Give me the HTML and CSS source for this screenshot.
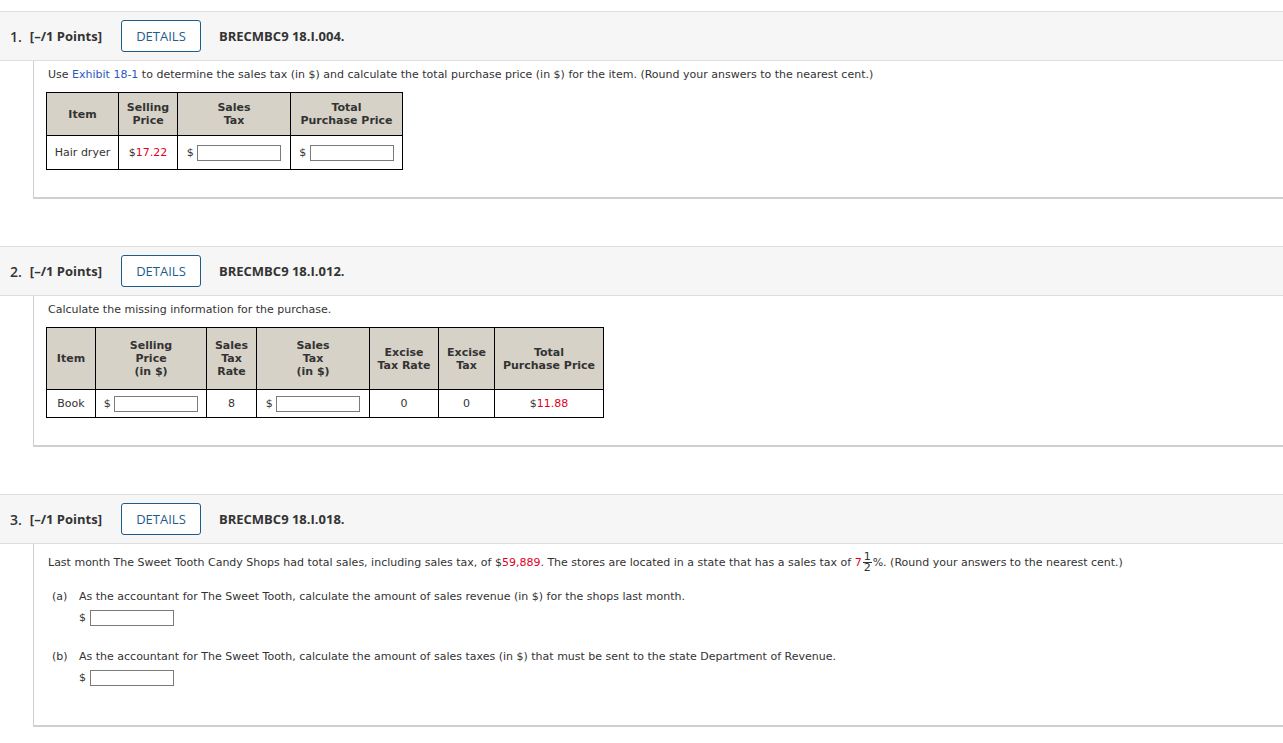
FILE: index.html
```html
<!DOCTYPE html>
<html lang="en">
<head>
    <meta charset="UTF-8">
    <title>Assignment</title>
    <link rel="stylesheet" href="styles.css">
</head>
<body>
    <div class="question">
        <div class="q-head">
            <span class="q-num">1.</span>
            <span class="q-points">[&ndash;/1 Points]</span>
            <button class="details">DETAILS</button>
            <span class="q-code">BRECMBC9 18.I.004.</span>
        </div>
        <div class="q-body">
            <p class="prompt">Use <a href="#" class="link">Exhibit 18-1</a> to determine the sales tax (in $) and calculate the total purchase price (in $) for the item. (Round your answers to the nearest cent.)</p>
            <table class="grid grid-one">
                <colgroup>
                    <col class="w72"><col class="w59"><col class="w113"><col class="w112">
                </colgroup>
                <tr class="head-row">
                    <th>Item</th>
                    <th>Selling<br>Price</th>
                    <th>Sales<br>Tax</th>
                    <th>Total<br>Purchase Price</th>
                </tr>
                <tr class="body-row tall">
                    <td>Hair dryer</td>
                    <td>$<span class="given">17.22</span></td>
                    <td>$ <input type="text" class="answer"></td>
                    <td>$ <input type="text" class="answer"></td>
                </tr>
            </table>
        </div>
    </div>

    <div class="question">
        <div class="q-head">
            <span class="q-num">2.</span>
            <span class="q-points">[&ndash;/1 Points]</span>
            <button class="details">DETAILS</button>
            <span class="q-code">BRECMBC9 18.I.012.</span>
        </div>
        <div class="q-body">
            <p class="prompt">Calculate the missing information for the purchase.</p>
            <table class="grid grid-two">
                <colgroup>
                    <col class="w49"><col class="w111"><col class="w50"><col class="w113"><col class="w69"><col class="w56"><col class="w109">
                </colgroup>
                <tr class="head-row three">
                    <th>Item</th>
                    <th>Selling<br>Price<br>(in $)</th>
                    <th>Sales<br>Tax<br>Rate</th>
                    <th>Sales<br>Tax<br>(in $)</th>
                    <th>Excise<br>Tax Rate</th>
                    <th>Excise<br>Tax</th>
                    <th>Total<br>Purchase Price</th>
                </tr>
                <tr class="body-row">
                    <td>Book</td>
                    <td>$ <input type="text" class="answer"></td>
                    <td>8</td>
                    <td>$ <input type="text" class="answer"></td>
                    <td>0</td>
                    <td>0</td>
                    <td>$<span class="given">11.88</span></td>
                </tr>
            </table>
        </div>
    </div>

    <div class="question">
        <div class="q-head">
            <span class="q-num">3.</span>
            <span class="q-points">[&ndash;/1 Points]</span>
            <button class="details">DETAILS</button>
            <span class="q-code">BRECMBC9 18.I.018.</span>
        </div>
        <div class="q-body">
            <p class="prompt lead">Last month The Sweet Tooth Candy Shops had total sales, including sales tax, of $<span class="given">59,889</span>. The stores are located in a state that has a sales tax of <span class="given">7</span><span class="frac"><span class="num">1</span><span class="den">2</span></span>%. (Round your answers to the nearest cent.)</p>
            <div class="part">
                <span class="part-label">(a)</span>
                <div class="part-text">
                    <p>As the accountant for The Sweet Tooth, calculate the amount of sales revenue (in $) for the shops last month.</p>
                    <p class="entry-line">$ <input type="text" class="answer"></p>
                </div>
            </div>
            <div class="part">
                <span class="part-label">(b)</span>
                <div class="part-text">
                    <p>As the accountant for The Sweet Tooth, calculate the amount of sales taxes (in $) that must be sent to the state Department of Revenue.</p>
                    <p class="entry-line">$ <input type="text" class="answer"></p>
                </div>
            </div>
        </div>
    </div>
</body>
</html>
```

FILE: styles.css
```css
body {
    margin: 0;
    padding: 11px 0 0 0;
    background-color: #fff;
    font-family: "DejaVu Sans", Verdana, sans-serif;
    font-size: 11px;
    color: #333;
}

.question {
    margin-bottom: 47px;
}

.q-head {
    display: flex;
    align-items: center;
    height: 48px;
    padding-left: 10px;
    background-color: #f6f6f6;
    border-top: 1px solid #dedede;
    border-bottom: 1px solid #dedede;
    font-family: "Open Sans", sans-serif;
    color: #333;
}

.q-num {
    font-size: 14px;
    font-weight: 600;
    margin-right: 8px;
}

.q-points {
    font-size: 13px;
    font-weight: bold;
    margin-right: 19px;
}

.details {
    width: 80px;
    height: 32px;
    padding: 0;
    background-color: #fff;
    border: 1px solid #1e5c8a;
    border-radius: 3px;
    color: #1e5c8a;
    font-family: "Open Sans", sans-serif;
    font-size: 13px;
    margin-right: 18px;
}

.q-code {
    font-size: 13px;
    font-weight: bold;
}

.q-body {
    margin-left: 33px;
    padding: 7px 0 27px 12px;
    border-left: 1px solid #cfcfcf;
    border-bottom: 2px solid #cfcfcf;
}

.prompt {
    margin: 0 0 11px 2px;
    line-height: 13px;
}

.link {
    color: #2b58c2;
    text-decoration: none;
}

.given {
    color: #e3001b;
}

.grid {
    border-collapse: collapse;
    table-layout: fixed;
}

.grid-one {
    width: 356px;
}

.grid-two {
    width: 557px;
}

.w49 { width: 49px; }
.w50 { width: 50px; }
.w56 { width: 56px; }
.w59 { width: 59px; }
.w69 { width: 69px; }
.w72 { width: 72px; }
.w109 { width: 109px; }
.w111 { width: 111px; }
.w112 { width: 112px; }
.w113 { width: 113px; }

.grid th,
.grid td {
    border: 1px solid #000;
    text-align: center;
    vertical-align: middle;
    padding: 0 2px;
    white-space: nowrap;
}

.grid th {
    background-color: #d6d2c7;
    font-weight: bold;
    line-height: 13px;
}

.head-row {
    height: 43px;
}

.head-row.three {
    height: 62px;
}

.body-row {
    height: 28px;
}

.body-row.tall {
    height: 34px;
}

.answer {
    width: 84px;
    height: 16px;
    box-sizing: border-box;
    border: 1px solid #7a7a7a;
    padding: 0 2px;
    margin: 0;
    vertical-align: middle;
    font-size: 11px;
}

.lead {
    margin-top: 1px;
    margin-bottom: 17px;
}

.frac {
    display: inline-flex;
    flex-direction: column;
    align-items: center;
    vertical-align: middle;
    line-height: 10px;
    margin: 0 1px;
}

.frac .num {
    border-bottom: 1px solid #333;
    padding: 0 1px;
}

.part {
    display: flex;
    margin-left: 6px;
    margin-bottom: 24px;
}

.part:last-child {
    margin-bottom: 12px;
}

.part-label {
    width: 27px;
    line-height: 13px;
}

.part-text p {
    margin: 0;
    line-height: 13px;
}

.part-text .entry-line {
    margin-top: 7px;
}
```
